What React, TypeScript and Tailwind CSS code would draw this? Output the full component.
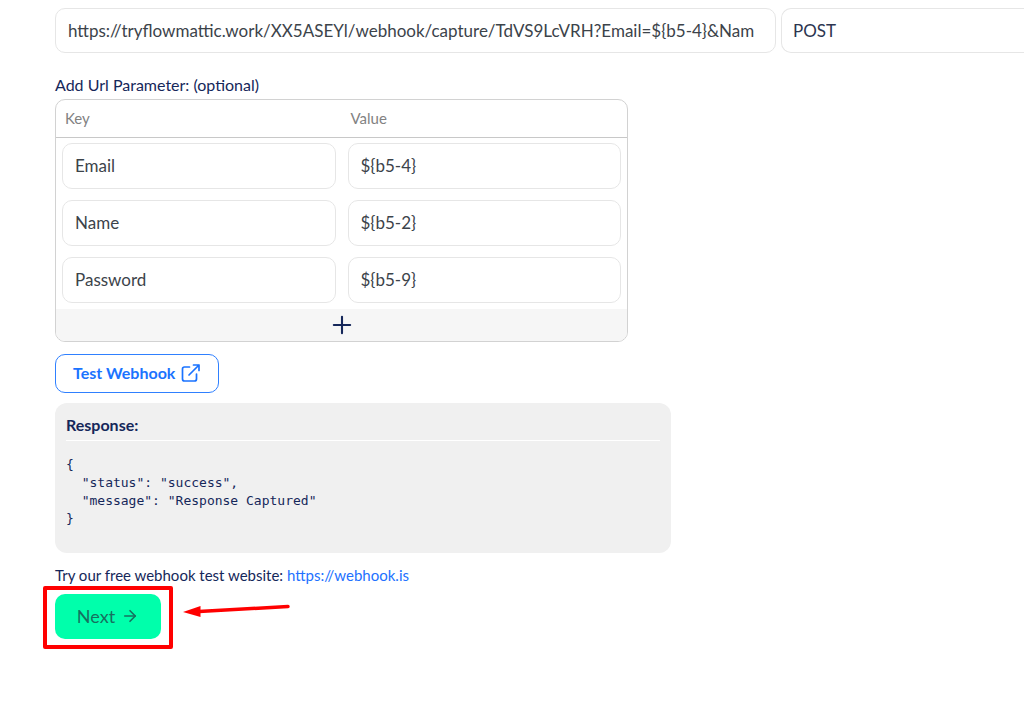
import { useState } from 'react';
import { ArrowRight, Plus } from 'lucide-react';

interface UrlParam {
  key: string;
  value: string;
}

const initialParams: UrlParam[] = [
  { key: 'Email', value: '${b5-4}' },
  { key: 'Name', value: '${b5-2}' },
  { key: 'Password', value: '${b5-9}' },
];

const response = {
  status: 'success',
  message: 'Response Captured',
};

const fieldClass =
  'w-full rounded-[10px] border border-[#e6e6e6] bg-white px-3 text-[17px] text-[#3c434a] outline-none';

const ExternalIcon = () => (
  <svg
    className="h-5 w-5"
    viewBox="0 0 20 20"
    fill="none"
    stroke="currentColor"
    strokeWidth="1.7"
    strokeLinecap="round"
    strokeLinejoin="round"
    aria-hidden="true"
  >
    <path d="M8.500 4H3.500a2 2 0 0 0-2 2V16a2 2 0 0 0 2 2h10a2 2 0 0 0 2-2v-5" />
    <path d="M8 12 18 2M12.500 2H18v5.500" />
  </svg>
);

export default function App() {
  const [url, setUrl] = useState(
    'https://tryflowmattic.work/XX5ASEYl/webhook/capture/TdVS9LcVRH?Email=${b5-4}&Nam'
  );
  const [params, setParams] = useState(initialParams);

  const updateParam = (index: number, field: keyof UrlParam, text: string) => {
    setParams(params.map((param, i) => (i === index ? { ...param, [field]: text } : param)));
  };

  return (
    <main className="min-h-screen overflow-hidden bg-white pt-2 pl-[55px] font-['Lato',sans-serif] text-[16px] leading-6 text-[#15275a]">
      <div className="flex gap-[5px]">
        <input
          aria-label="Webhook URL"
          className={`${fieldClass} h-[45px] max-w-[721px] shrink-0`}
          value={url}
          onChange={(e) => setUrl(e.target.value)}
        />
        <select
          aria-label="Method"
          className="h-[45px] min-w-0 flex-1 appearance-none rounded-l-[10px] border border-r-0 border-[#e6e6e6] bg-white px-[11px] text-[17px] text-[#2c3550] outline-none"
        >
          <option>POST</option>
          <option>GET</option>
        </select>
      </div>

      <h2 className="mt-5 mb-[2px]">Add Url Parameter: (optional)</h2>
      <div className="max-w-[573px] overflow-hidden rounded-[10px] border border-[#d2d2d2]">
        <table className="w-full table-fixed border-collapse">
          <thead>
            <tr className="h-[37px] border-b border-[#c8c8c8] text-left text-[15px] text-[#828282]">
              <th className="px-[9px] font-normal">Key</th>
              <th className="px-[9px] font-normal">Value</th>
            </tr>
          </thead>
          <tbody>
            {params.map((param, index) => (
              <tr key={index}>
                <td className="px-[6px] pt-[5px] pb-[6px]">
                  <input
                    aria-label={`Key ${index + 1}`}
                    className={`${fieldClass} block h-[46px]`}
                    value={param.key}
                    onChange={(e) => updateParam(index, 'key', e.target.value)}
                  />
                </td>
                <td className="px-[6px] pt-[5px] pb-[6px]">
                  <input
                    aria-label={`Value ${index + 1}`}
                    className={`${fieldClass} block h-[46px]`}
                    value={param.value}
                    onChange={(e) => updateParam(index, 'value', e.target.value)}
                  />
                </td>
              </tr>
            ))}
          </tbody>
        </table>
        <button
          type="button"
          aria-label="Add parameter"
          className="flex h-8 w-full items-center justify-center bg-[#f6f6f6]"
          onClick={() => setParams([...params, { key: '', value: '' }])}
        >
          <Plus className="h-7 w-7" strokeWidth={1.8} />
        </button>
      </div>

      <button
        type="button"
        className="mt-3 flex h-[39px] items-center gap-[6px] rounded-[10px] border border-[#2f80ff] px-[17px] font-bold text-[#1a73ff]"
      >
        Test Webhook
        <ExternalIcon />
      </button>

      <section className="mt-[10px] h-[150px] max-w-[616px] rounded-xl bg-[#f0f0f0] px-[11px] pt-[10px]">
        <h3 className="border-b border-white pb-[3px] font-bold">Response:</h3>
        <pre className="mt-[15px] font-['DejaVu_Sans_Mono',monospace] text-[13px] leading-[18px]">
          {JSON.stringify(response, null, 2)}
        </pre>
      </section>

      <p className="mt-[10px] mb-[7px] text-[15px]">
        Try our free webhook test website:{' '}
        <a href="https://webhook.is" className="text-[#2271ff]">
          https://webhook.is
        </a>
      </p>

      <div className="flex items-start">
        <div className="relative">
          <button
            type="button"
            className="flex h-[45px] w-[106px] items-center justify-center gap-[6px] rounded-[10px] bg-[#00ffab] text-[18px] text-[#17705f]"
          >
            Next
            <ArrowRight className="h-[18px] w-[18px]" strokeWidth={2.2} />
          </button>
          <div className="pointer-events-none absolute -inset-x-3 -top-2 -bottom-[10px] rounded-[2px] border-4 border-[#ff0000]" />
        </div>
        <svg className="mt-2 ml-[22px] h-4 w-[108px]" viewBox="0 0 108 16" aria-hidden="true">
          <path d="M16 9.500 105 4.500" stroke="#ff0000" strokeWidth="3.5" strokeLinecap="round" />
          <path d="M0 10 17.500 4v11z" fill="#ff0000" />
        </svg>
      </div>
    </main>
  );
}
